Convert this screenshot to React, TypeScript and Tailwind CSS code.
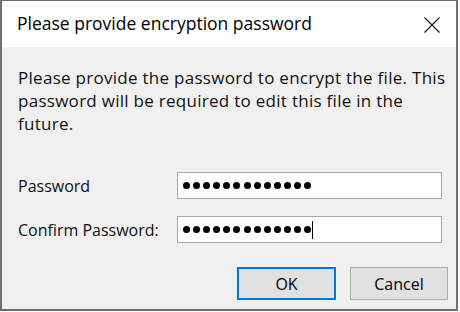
import React from "react";

const FONT = { fontFamily: '"Open Sans", "Noto Sans", sans-serif' };

function Dots({ count, caret }: { count: number; caret?: boolean }) {
  return (
    <div className="flex items-center h-full pl-[5px] gap-[3.1px]">
      {Array.from({ length: count }).map((_, i) => (
        <span key={i} className="block w-[7px] h-[7px] rounded-full bg-black" />
      ))}
      {caret && <span className="block w-px h-[18px] bg-black -ml-[2px]" />}
    </div>
  );
}

export default function App() {
  return (
    <div className="w-[460px] h-[312px] bg-white" style={FONT}>
      <div className="w-[458px] h-[311px] flex flex-col bg-[#f0f0f0] border border-[#6f6f6f] border-l-2 border-r-2 border-b-2">
        {/* title bar */}
        <div className="h-[46px] shrink-0 bg-white flex items-center justify-between pl-[15px] pr-[16px]">
          <span className="text-[17.5px] text-black leading-none">Please provide encryption password</span>
          <svg width="16" height="16" viewBox="0 0 16 16" className="mt-[1px]">
            <path d="M0.5 0.5 L15.5 15.5 M15.5 0.5 L0.5 15.5" stroke="#111" strokeWidth="1.1" fill="none" />
          </svg>
        </div>

        <div className="flex-1 flex flex-col pl-[16px] pr-[8px] pt-[19px] pb-[9px]">
          <p className="text-[17px] leading-[23px] tracking-[0.28px] text-[#111] w-[434px]">
            Please provide the password to encrypt the file. This password will be required to edit this file in the future.
          </p>

          <div className="grid grid-cols-[159px_265px] gap-y-[17px] items-center mt-[37px]">
            <span className="text-[16px] text-[#111]">Password</span>
            <div className="h-[27px] bg-white border border-[#a9a9a9]">
              <Dots count={13} />
            </div>
            <span className="text-[16px] text-[#111]">Confirm Password:</span>
            <div className="h-[27px] bg-white border border-[#a9a9a9]">
              <Dots count={13} caret />
            </div>
          </div>

          <div className="mt-auto flex justify-end gap-[14px]">
            <button className="w-[99px] h-[33px] bg-[#e1e1e1] border-2 border-[#0078d7] text-[16px] text-black">
              OK
            </button>
            <button className="w-[98px] h-[33px] bg-[#e1e1e1] border border-[#adadad] text-[16px] text-black">
              Cancel
            </button>
          </div>
        </div>
      </div>
    </div>
  );
}
